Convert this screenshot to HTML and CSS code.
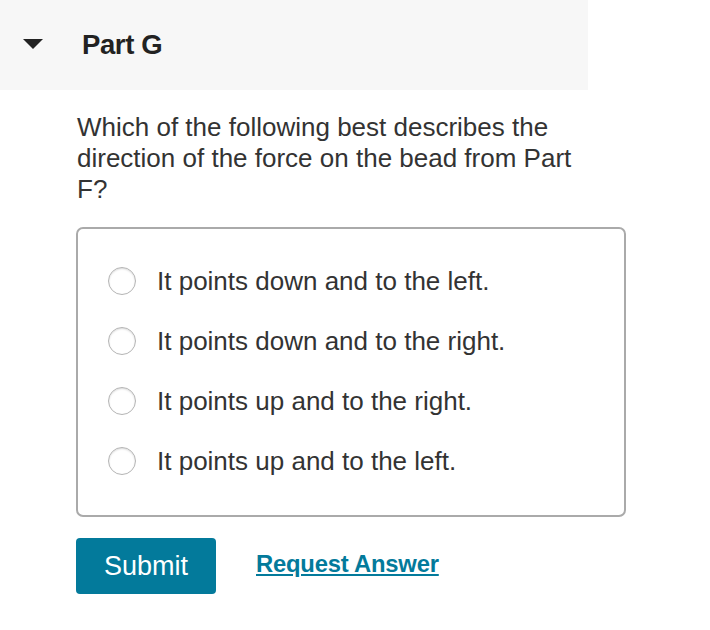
FILE: index.html
```html
<!DOCTYPE html>
<html>
<head>
<meta charset="utf-8">
<link rel="stylesheet" href="styles.css">
</head>
<body>
<div class="header">
  <svg class="caret" width="22" height="12" viewBox="0 0 22 12"><path d="M1 1 L21 1 L11 11 Z" fill="#222"/></svg>
  <h2 class="title">Part G</h2>
</div>
<div class="content">
  <p class="question">Which of the following best describes the direction of the force on the bead from Part F?</p>
  <div class="choices">
    <label class="choice"><span class="radio"></span><span>It points down and to the left.</span></label>
    <label class="choice"><span class="radio"></span><span>It points down and to the right.</span></label>
    <label class="choice"><span class="radio"></span><span>It points up and to the right.</span></label>
    <label class="choice"><span class="radio"></span><span>It points up and to the left.</span></label>
  </div>
  <div class="actions">
    <button class="submit">Submit</button>
    <a class="request" href="#">Request Answer</a>
  </div>
</div>
</body>
</html>
```
FILE: styles.css
```css
html, body { margin: 0; padding: 0; background: #fff; }
body { font-family: "Liberation Sans", Arial, sans-serif; color: #333; width: 710px; }
.header {
  width: 588px; height: 90px; background: #f7f7f7;
  display: flex; align-items: center; box-sizing: border-box; padding-left: 22px;
}
.caret { margin-top: -2px; }
.title { margin: 0 0 0 38px; font-size: 27.5px; font-weight: bold; color: #222; letter-spacing: -0.4px; }
.content { padding-left: 76px; width: 550px; }
.question { margin: 22px 0 0 1px; font-size: 26px; line-height: 31px; color: #333; width: 530px; }
.choices {
  margin-top: 22px; border: 2px solid #aaa; border-radius: 7px;
  height: 290px; box-sizing: border-box; padding: 22px 0 0 30px;
  display: flex; flex-direction: column;
}
.choice { display: flex; align-items: center; height: 60px; font-size: 26px; color: #333; }
.radio {
  width: 26px; height: 26px; border-radius: 50%; border: 1px solid #b5b5b5;
  box-shadow: inset 0 1px 2px rgba(0,0,0,0.15); background: #fff; margin-right: 21px; flex: none;
}
.actions { display: flex; align-items: center; margin-top: 21px; }
.submit {
  width: 140px; height: 56px; background: #037a9b; color: #fff; border: none; border-radius: 4px;
  font-family: "Liberation Sans", Arial, sans-serif; font-size: 27px; padding: 0;
}
.request { margin-left: 40px; font-size: 23.8px; font-weight: bold; color: #037a9b; text-decoration: underline; margin-top: -4px; letter-spacing: -0.2px; }
```
